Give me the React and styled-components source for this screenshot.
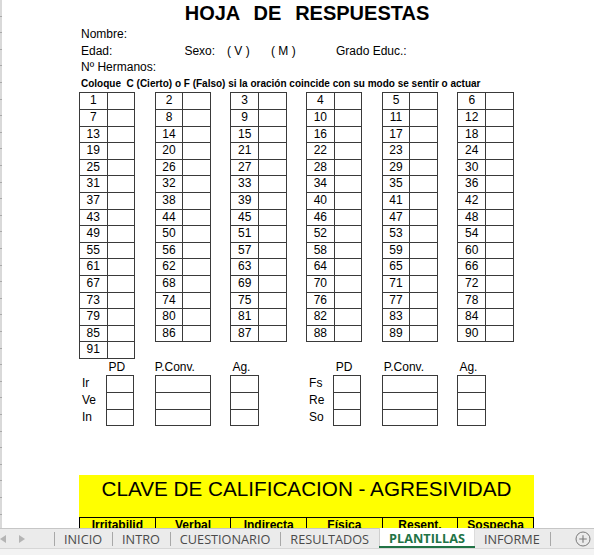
import React from 'react';
import styled, { createGlobalStyle } from 'styled-components';

const ROW = 16.6;
const CELL = 27.6;
const BLOCK_GAP = 19.5;
const LINE = '#3a3a3a';

const Global = createGlobalStyle`
  html, body { margin: 0; padding: 0; background: #fff; }
  body { font-family: "Liberation Sans", Arial, sans-serif; color: #000; }
  * { box-sizing: border-box; }
`;

const Window = styled.div`
  width: 594px;
  height: 555px;
  display: flex;
  flex-direction: column;
  overflow: hidden;
  background: #fff;
`;

const SheetArea = styled.div`
  height: 528px;
  flex: none;
  display: flex;
  overflow: hidden;
`;

const RowHeaderEdge = styled.div`
  width: 2px;
  flex: none;
  background: repeating-linear-gradient(
    to bottom,
    #d9d9d9 0,
    #d9d9d9 15.6px,
    #a9a9a9 15.6px,
    #a9a9a9 16.6px
  );
`;

const Sheet = styled.div`
  flex: 1;
  padding-left: 77px;
  display: flex;
  flex-direction: column;
  & > * {
    flex: none;
  }
`;

const Title = styled.div`
  width: 456px;
  height: 26px;
  line-height: 26px;
  font-size: 20px;
  font-weight: 700;
  text-align: center;
  white-space: pre;
  word-spacing: 1.4px;
`;

const InfoRow = styled.div`
  height: ${ROW}px;
  line-height: ${ROW}px;
  font-size: ${p => (p.$small ? 10 : 12)}px;
  font-weight: ${p => (p.$small ? 700 : 400)};
  padding-left: 2px;
  display: flex;
  white-space: pre;
`;

const Field = styled.span`
  flex: none;
  width: ${p => (p.$w ? `${p.$w}px` : 'auto')};
`;

const AnswerGrid = styled.div`
  display: flex;
  align-items: flex-start;
  gap: ${BLOCK_GAP}px;
`;

const Block = styled.div`
  display: grid;
  grid-template-columns: ${CELL}px ${CELL}px;
  border-top: 1px solid ${LINE};
  border-left: 1px solid ${LINE};
`;

const Cell = styled.div`
  height: ${ROW}px;
  line-height: ${ROW - 1}px;
  font-size: 12px;
  text-align: center;
  border-right: 1px solid ${LINE};
  border-bottom: 1px solid ${LINE};
`;

const ScoreRow = styled.div`
  display: flex;
  gap: ${BLOCK_GAP}px;
`;

const Slot = styled.div`
  width: ${2 * CELL + 1}px;
  display: flex;
`;

const LabelCol = styled.div`
  width: ${CELL - 1}px;
  display: flex;
  flex-direction: column;
`;

const BoxCol = styled.div`
  display: flex;
  flex-direction: column;
`;

const HeadCell = styled.div`
  height: ${ROW}px;
  line-height: ${ROW}px;
  font-size: 12px;
  padding-left: ${p => p.$pad ?? 2}px;
  white-space: nowrap;
`;

const SideLabel = styled.div`
  height: ${ROW}px;
  line-height: ${ROW - 1}px;
  font-size: 12px;
  padding-left: 3px;
`;

const Spacer1 = styled.div`
  height: 1px;
`;

const Box = styled.div`
  width: ${p => p.$w + 1}px;
  border-top: 1px solid ${LINE};
  border-left: 1px solid ${LINE};
`;

const BoxCell = styled.div`
  height: ${ROW}px;
  border-right: 1px solid ${LINE};
  border-bottom: 1px solid ${LINE};
`;

const KeyTitle = styled.div`
  margin-top: 48.6px;
  width: 455px;
  height: 42.3px;
  background: #ffff00;
  font-size: 20.7px;
  line-height: 27.7px;
  text-align: center;
  white-space: nowrap;
`;

const KeyHeader = styled.div`
  width: 455px;
  display: grid;
  grid-template-columns: repeat(6, 1fr);
  background: #ffff00;
  border-top: 1px solid #000;
  border-left: 1px solid #000;
`;

const KeyHeadCell = styled.div`
  height: 20px;
  line-height: 14.3px;
  font-size: 12px;
  font-weight: 700;
  text-align: center;
  border-right: 1px solid #000;
`;

/* ---------- tab bar ---------- */

const TabBar = styled.div`
  height: 27px;
  flex: none;
  display: flex;
  flex-direction: column;
  background: #f3f3f3;
`;

const TabStrip = styled.div`
  height: 21px;
  display: flex;
  align-items: stretch;
  background: #ebebeb;
  border-top: 1px solid #c6c6c6;
  border-bottom: 1px solid #d6d6d6;
  font-family: "Open Sans", "Noto Sans", sans-serif;
`;

const NavArea = styled.div`
  width: 54px;
  flex: none;
  display: flex;
  align-items: center;
  padding-left: 0;
  gap: 13px;
`;

const Sep = styled.span`
  width: 1px;
  height: 14px;
  align-self: center;
  background: #a8a8a8;
  flex: none;
`;

const Tab = styled.div`
  flex: none;
  display: flex;
  align-items: center;
  padding: 0 10px 0 ${p => (p.$active ? 10 : 9)}px;
  font-size: 12.7px;
  font-weight: ${p => (p.$active ? 700 : 400)};
  color: ${p => (p.$active ? '#217346' : '#4a4a4a')};
  background: ${p => (p.$active ? '#fff' : 'transparent')};
  box-shadow: ${p => (p.$active ? 'inset 0 -2px 0 #217346, inset 1px 0 0 #cfcfcf, inset -1px 0 0 #dcdcdc' : 'none')};
  margin-top: ${p => (p.$active ? '-1px' : '0')};
  white-space: nowrap;
`;

const AddArea = styled.div`
  flex: 1;
  display: flex;
  align-items: center;
  justify-content: flex-end;
  padding-right: 3px;
`;

const Arrow = ({ dir }) => (
  <svg width="6" height="8" viewBox="0 0 6 8">
    <path d={dir === 'left' ? 'M6 0 L0 4 L6 8 Z' : 'M0 0 L6 4 L0 8 Z'} fill="#b4b4b4" />
  </svg>
);

const PlusCircle = () => (
  <svg width="16" height="16" viewBox="0 0 16 16">
    <circle cx="8" cy="8" r="7" fill="none" stroke="#7a7a7a" strokeWidth="1" />
    <path d="M8 4.2 V11.8 M4.2 8 H11.8" stroke="#7a7a7a" strokeWidth="1.1" />
  </svg>
);

const rowsFor = b => (b === 0 ? 16 : 15);

const scoreGroups = [
  { labels: ['Ir', 'Ve', 'In'] },
  { labels: ['Fs', 'Re', 'So'] },
];

const keyHeads = ['Irritabilid', 'Verbal', 'Indirecta', 'Física', 'Resent.', 'Sospecha'];
const tabs = ['INICIO', 'INTRO', 'CUESTIONARIO', 'RESULTADOS', 'PLANTILLAS', 'INFORME'];
const ACTIVE = 'PLANTILLAS';

export default function App() {
  return (
    <Window>
      <Global />
      <SheetArea>
        <RowHeaderEdge />
        <Sheet>
          <Title>{'HOJA  DE  RESPUESTAS'}</Title>
          <InfoRow>
            <Field>Nombre:</Field>
          </InfoRow>
          <InfoRow>
            <Field $w={103.4}>Edad:</Field>
            <Field $w={42.6}>Sexo:</Field>
            <Field $w={44}>( V )</Field>
            <Field $w={65}>( M )</Field>
            <Field>Grado Educ.:</Field>
          </InfoRow>
          <InfoRow>
            <Field>Nº Hermanos:</Field>
          </InfoRow>
          <InfoRow $small>
            <Field>{'Coloque  C (Cierto) o F (Falso) si la oración coincide con su modo se sentir o actuar'}</Field>
          </InfoRow>

          <AnswerGrid>
            {[0, 1, 2, 3, 4, 5].map(b => (
              <Block key={b}>
                {Array.from({ length: rowsFor(b) }, (_, r) => (
                  <React.Fragment key={r}>
                    <Cell>{r * 6 + b + 1}</Cell>
                    <Cell />
                  </React.Fragment>
                ))}
              </Block>
            ))}
          </AnswerGrid>

          <ScoreRow>
            {scoreGroups.map((g, gi) => (
              <React.Fragment key={gi}>
                <Slot>
                  <LabelCol>
                    <HeadCell />
                    <Spacer1 />
                    {g.labels.map(l => (
                      <SideLabel key={l}>{l}</SideLabel>
                    ))}
                  </LabelCol>
                  <BoxCol>
                    <HeadCell $pad={3}>PD</HeadCell>
                    <Box $w={CELL}>
                      <BoxCell />
                      <BoxCell />
                      <BoxCell />
                    </Box>
                  </BoxCol>
                </Slot>
                <Slot>
                  <BoxCol>
                    <HeadCell $pad={gi === 0 ? 0 : 2}>P.Conv.</HeadCell>
                    <Box $w={2 * CELL}>
                      <BoxCell />
                      <BoxCell />
                      <BoxCell />
                    </Box>
                  </BoxCol>
                </Slot>
                <Slot>
                  <BoxCol>
                    <HeadCell $pad={2}>Ag.</HeadCell>
                    <Box $w={CELL}>
                      <BoxCell />
                      <BoxCell />
                      <BoxCell />
                    </Box>
                  </BoxCol>
                </Slot>
              </React.Fragment>
            ))}
          </ScoreRow>

          <KeyTitle>CLAVE DE CALIFICACION - AGRESIVIDAD</KeyTitle>
          <KeyHeader>
            {keyHeads.map(h => (
              <KeyHeadCell key={h}>{h}</KeyHeadCell>
            ))}
          </KeyHeader>
        </Sheet>
      </SheetArea>

      <TabBar>
        <TabStrip>
          <NavArea>
            <Arrow dir="left" />
            <Arrow dir="right" />
          </NavArea>
          {tabs.map((t, i) => {
            const active = t === ACTIVE;
            const nextActive = tabs[i + 1] === ACTIVE;
            return (
              <React.Fragment key={t}>
                {!active && i === 0 && <Sep />}
                <Tab $active={active}>{t}</Tab>
                {!active && !nextActive && <Sep />}
              </React.Fragment>
            );
          })}
          <AddArea>
            <PlusCircle />
          </AddArea>
        </TabStrip>
      </TabBar>
    </Window>
  );
}
